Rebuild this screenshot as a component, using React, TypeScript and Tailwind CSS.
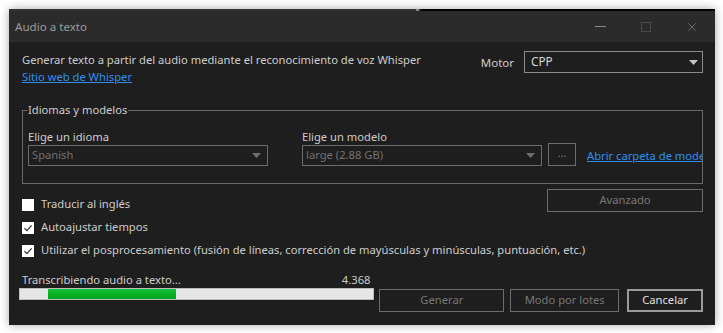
import {X} from 'lucide-react';

const font = {fontFamily: '"Noto Sans", "Open Sans", sans-serif'};

const Caret = ({dim}: {dim?: boolean}) => (
  <svg width="9" height="5" viewBox="0 0 9 5" className="shrink-0">
    <path d="M0 0h9L4.5 5z" fill={dim ? '#6e6e6e' : '#c4c4c4'} />
  </svg>
);

const Check = () => (
  <span className="flex h-[12px] w-[12px] shrink-0 items-center justify-center bg-white">
    <svg width="10" height="10" viewBox="0 0 10 10">
      <path d="M1.5 5.2 4 7.6 8.6 2.4" stroke="#333" strokeWidth="1.2" fill="none" />
    </svg>
  </span>
);

const CheckRow = ({label, checked}: {label: string; checked?: boolean}) => (
  <div className="flex h-[23px] items-center gap-[7px] text-[11.2px] text-[#cdcdcd]">
    {checked ? <Check /> : <span className="h-[12px] w-[12px] shrink-0 bg-white" />}
    <span>{label}</span>
  </div>
);

export default function App() {
  return (
    <div className="min-h-[333px] w-[723px] bg-white p-[9px]" style={font}>
      <div className="flex h-[316px] w-[706px] flex-col bg-[#1e1e1e] shadow-[0_0_9px_rgba(0,0,0,0.35)]">
        {/* top edge */}
        <div className="flex h-[2px]">
          <div className="w-[407px] bg-[#333]" />
          <div className="w-[3px] bg-[#888]" />
          <div className="w-[2px] bg-[#2a2a2a]" />
          <div className="flex-1 bg-black" />
        </div>

        {/* title bar */}
        <div className="flex h-[31px] items-center bg-[#2b2b2b] pl-[6px]">
          <span className="text-[11.6px] text-[#9b9b9b]">Audio a texto</span>
          <div className="ml-auto flex items-center">
            <div className="flex w-[46px] justify-center">
              <div className="h-px w-[11px] bg-[#8a8a8a]" />
            </div>
            <div className="flex w-[46px] justify-center">
              <div className="h-[10px] w-[10px] border border-[#4a4a4a]" />
            </div>
            <div className="flex w-[46px] justify-center">
              <X size={14} strokeWidth={1.05} color="#8d8d8d" />
            </div>
          </div>
        </div>

        {/* body */}
        <div className="flex flex-1 flex-col pl-[13px] pr-[12px] text-[11.2px] text-[#cdcdcd]">
          <div className="flex pt-[9px]">
            <div className="flex flex-col leading-[17px]">
              <span>Generar texto a partir del audio mediante el reconocimiento de voz Whisper</span>
              <span className="text-[#2f8ff0] underline decoration-[#2f8ff0]">Sitio web de Whisper</span>
            </div>
            <div className="ml-auto flex items-start gap-[10px]">
              <span className="pt-[3px] text-[11.5px]">Motor</span>
              <div className="flex h-[22px] w-[179px] items-center border border-[#8c8c8c] pl-[6px] pr-[4px]">
                <span className="flex-1 text-[11.8px] text-[#d6d6d6]">CPP</span>
                <Caret />
              </div>
            </div>
          </div>

          <fieldset className="mt-[18px] h-[81px] min-w-0 border border-[#6a6a6a] pl-[5px] pr-0">
            <legend className="-ml-[1px] px-[1px] leading-[14px] text-[#cdcdcd]">Idiomas y modelos</legend>
            <div className="mt-[12px] flex items-end overflow-hidden">
              <div className="flex w-[240px] shrink-0 flex-col">
                <span className="leading-[16px]">Elige un idioma</span>
                <div className="flex h-[21px] items-center border border-[#6c6c6c] pl-[3px] pr-[6px]">
                  <span className="flex-1 text-[#727272]">Spanish</span>
                  <Caret dim />
                </div>
              </div>
              <div className="ml-[34px] flex w-[240px] shrink-0 flex-col">
                <span className="leading-[16px]">Elige un modelo</span>
                <div className="flex h-[21px] items-center border border-[#6c6c6c] pl-[3px] pr-[6px]">
                  <span className="flex-1 text-[#727272]">large (2.88 GB)</span>
                  <Caret dim />
                </div>
              </div>
              <div className="ml-[6px] flex h-[23px] w-[28px] shrink-0 items-center justify-center border border-[#6c6c6c] pb-[3px] text-[#7a7a7a]">
                ...
              </div>
              <span className="ml-[11px] shrink-0 whitespace-nowrap pb-[1px] text-[#2f8ff0] underline decoration-[#2f8ff0]">
                Abrir carpeta de modelos
              </span>
            </div>
          </fieldset>

          <div className="mt-[5px] flex items-start">
            <div className="pt-[4px]">
              <CheckRow label="Traducir al inglés" />
            </div>
            <div className="ml-auto flex h-[23px] w-[156px] items-center justify-center border border-[#6c6c6c] text-[#787878]">
              Avanzado
            </div>
          </div>
          <CheckRow label="Autoajustar tiempos" checked />
          <CheckRow
            label="Utilizar el posprocesamiento (fusión de líneas, corrección de mayúsculas y minúsculas, puntuación, etc.)"
            checked
          />

          <div className="-ml-[3px] mt-[10px] flex items-end">
            <div className="flex w-[356px] flex-col">
              <div className="flex pl-[3px] pr-[4px] leading-[16px]">
                <span>Transcribiendo audio a texto...</span>
                <span className="ml-auto">4.368</span>
              </div>
              <div className="mb-[12px] flex h-[12px] items-center border border-[#bcbcbc] bg-[#e6e6e6] pl-[28px]">
                <div className="h-[10px] w-[128px] bg-gradient-to-b from-[#14c43a] via-[#06b025] to-[#06a823]" />
              </div>
            </div>
            <div className="ml-[5px] flex h-[23px] w-[125px] items-center justify-center border border-[#6c6c6c] text-[#787878]">
              Generar
            </div>
            <div className="ml-[6px] flex h-[23px] w-[109px] items-center justify-center border border-[#6c6c6c] text-[#787878]">
              Modo por lotes
            </div>
            <div className="ml-[8px] flex h-[23px] w-[76px] items-center justify-center border-2 border-[#9a9a9a] text-[#e0e0e0]">
              Cancelar
            </div>
          </div>
        </div>
      </div>
    </div>
  );
}
